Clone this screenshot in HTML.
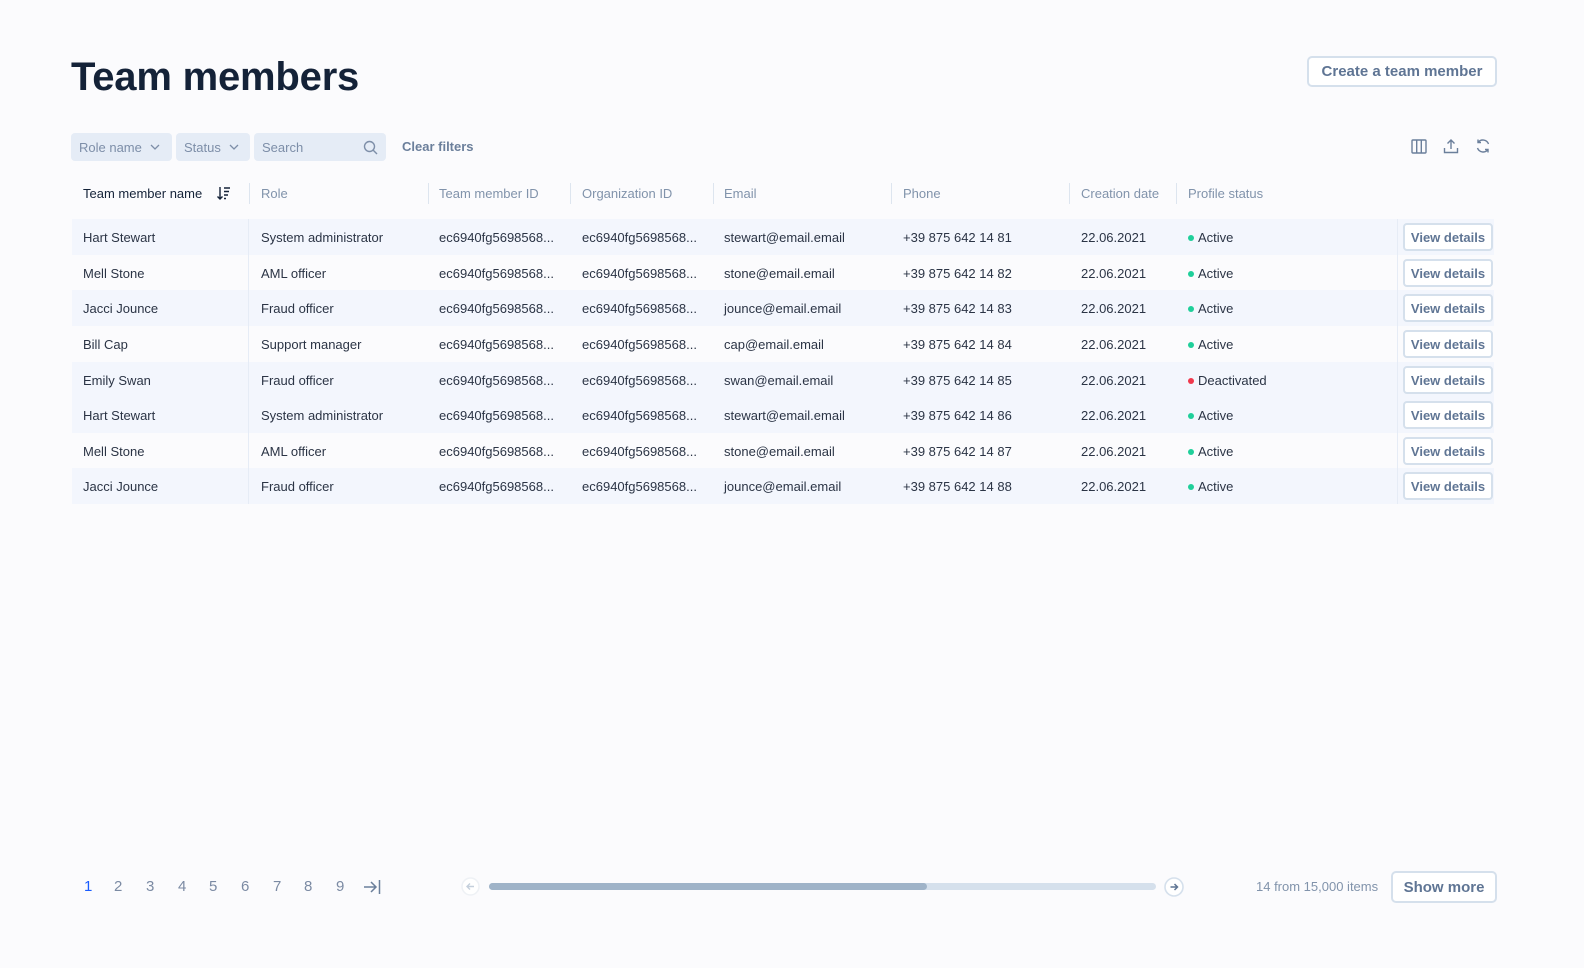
<!DOCTYPE html>
<html><head><meta charset="utf-8"><style>
*{box-sizing:border-box;margin:0;padding:0}
body{width:1584px;height:968px;background:#fbfbfd;font-family:"Liberation Sans",sans-serif;color:#2b3445;position:relative;overflow:hidden}
.abs{position:absolute}
h1{position:absolute;left:71px;top:55px;font-size:40px;font-weight:700;color:#142238;letter-spacing:-0.2px}
.btn{position:absolute;border:2px solid #d5e0ec;border-radius:5px;background:#fff;color:#5f7594;font-weight:700;display:flex;align-items:center;justify-content:center}
.filt{position:absolute;top:133px;height:28px;background:#e5ecf6;border-radius:4px;color:#7d8ea8;font-size:13px;display:flex;align-items:center;padding-left:8px}
.hd{position:absolute;top:186px;font-size:13px;color:#8193ab}
.sep{position:absolute;width:1px;background:#dde5ef}
.row{position:absolute;left:72px;width:1422px;height:36px;font-size:13px;color:#2b3445}
.row.l{background:#f3f6fd}
.row span{position:absolute;top:11px;white-space:nowrap}
.vd{position:absolute;left:1331px;top:4px;width:90px;height:28px;border:2px solid #d5e0ec;border-radius:4px;background:#fff;color:#5f7594;font-size:13px;font-weight:700;display:flex;align-items:center;justify-content:center}
.dot{display:inline-block;width:6px;height:6px;border-radius:50%;background:#1fcf9a;margin-right:4px;vertical-align:1px}
.pg{position:absolute;top:878px;font-size:15px;color:#7b8aa3}
</style></head><body>
<h1>Team members</h1>
<div class="btn" style="left:1307px;top:56px;width:190px;height:31px;font-size:15px">Create a team member</div>

<div class="filt" style="left:71px;width:101px">Role name <svg style="margin-left:8px" width="10" height="6" viewBox="0 0 10 6"><path d="M1 1l4 4 4-4" fill="none" stroke="#7d8ea8" stroke-width="1.3"/></svg></div>
<div class="filt" style="left:176px;width:74px">Status <svg style="margin-left:8px" width="10" height="6" viewBox="0 0 10 6"><path d="M1 1l4 4 4-4" fill="none" stroke="#7d8ea8" stroke-width="1.3"/></svg></div>
<div class="filt" style="left:254px;width:132px">Search <svg style="position:absolute;right:8px;top:7px" width="15" height="15" viewBox="0 0 15 15"><circle cx="6.5" cy="6.5" r="5" fill="none" stroke="#7d8ea8" stroke-width="1.4"/><path d="M10 10l4 4" stroke="#7d8ea8" stroke-width="1.4"/></svg></div>
<div class="abs" style="left:402px;top:139px;font-size:13px;font-weight:700;color:#6b7f9b">Clear filters</div>

<svg class="abs" style="left:1411px;top:139px" width="16" height="15" viewBox="0 0 16 15"><rect x="1" y="1" width="14" height="13" rx="1" fill="none" stroke="#6b7f9b" stroke-width="1.4"/><path d="M5.7 1v13M10.3 1v13" stroke="#6b7f9b" stroke-width="1.4"/></svg>
<svg class="abs" style="left:1443px;top:138px" width="16" height="16" viewBox="0 0 16 16"><path d="M8 11V2M4.5 5.5L8 2l3.5 3.5M1.5 10v4.5h13V10" fill="none" stroke="#6b7f9b" stroke-width="1.4"/></svg>
<svg class="abs" style="left:1475px;top:138px" width="16" height="16" viewBox="0 0 16 16"><path d="M13.5 6A6 6 0 0 0 3 4.5M2.5 10A6 6 0 0 0 13 11.5M3 1.5v3h3M13 14.5v-3h-3" fill="none" stroke="#6b7f9b" stroke-width="1.4"/></svg>

<div class="hd" style="left:83px;color:#142238">Team member name</div>
<svg class="abs" style="left:216px;top:186px" width="15" height="15" viewBox="0 0 15 15"><path d="M4 1v12M1.5 10.5L4 13l2.5-2.5M8 2h6M8 5.5h5M8 9h4M8 12.5h2" fill="none" stroke="#142238" stroke-width="1.4"/></svg>
<div class="hd" style="left:261px">Role</div>
<div class="hd" style="left:439px">Team member ID</div>
<div class="hd" style="left:582px">Organization ID</div>
<div class="hd" style="left:724px">Email</div>
<div class="hd" style="left:903px">Phone</div>
<div class="hd" style="left:1081px">Creation date</div>
<div class="hd" style="left:1188px">Profile status</div>
<div class="sep" style="left:249px;top:183px;height:21px"></div>
<div class="sep" style="left:428px;top:183px;height:21px"></div>
<div class="sep" style="left:570px;top:183px;height:21px"></div>
<div class="sep" style="left:713px;top:183px;height:21px"></div>
<div class="sep" style="left:891px;top:183px;height:21px"></div>
<div class="sep" style="left:1069px;top:183px;height:21px"></div>
<div class="sep" style="left:1176px;top:183px;height:21px"></div>

<div class="row l" style="top:219px"><span style="left:11px">Hart Stewart</span><span style="left:189px">System administrator</span><span style="left:367px">ec6940fg5698568...</span><span style="left:510px">ec6940fg5698568...</span><span style="left:652px">stewart@email.email</span><span style="left:831px">+39 875 642 14 81</span><span style="left:1009px">22.06.2021</span><span style="left:1116px"><i class="dot"></i>Active</span><div class="vd">View details</div></div>
<div class="row" style="top:255px"><span style="left:11px">Mell Stone</span><span style="left:189px">AML officer</span><span style="left:367px">ec6940fg5698568...</span><span style="left:510px">ec6940fg5698568...</span><span style="left:652px">stone@email.email</span><span style="left:831px">+39 875 642 14 82</span><span style="left:1009px">22.06.2021</span><span style="left:1116px"><i class="dot"></i>Active</span><div class="vd">View details</div></div>
<div class="row l" style="top:290px"><span style="left:11px">Jacci Jounce</span><span style="left:189px">Fraud officer</span><span style="left:367px">ec6940fg5698568...</span><span style="left:510px">ec6940fg5698568...</span><span style="left:652px">jounce@email.email</span><span style="left:831px">+39 875 642 14 83</span><span style="left:1009px">22.06.2021</span><span style="left:1116px"><i class="dot"></i>Active</span><div class="vd">View details</div></div>
<div class="row" style="top:326px"><span style="left:11px">Bill Cap</span><span style="left:189px">Support manager</span><span style="left:367px">ec6940fg5698568...</span><span style="left:510px">ec6940fg5698568...</span><span style="left:652px">cap@email.email</span><span style="left:831px">+39 875 642 14 84</span><span style="left:1009px">22.06.2021</span><span style="left:1116px"><i class="dot"></i>Active</span><div class="vd">View details</div></div>
<div class="row l" style="top:362px"><span style="left:11px">Emily Swan</span><span style="left:189px">Fraud officer</span><span style="left:367px">ec6940fg5698568...</span><span style="left:510px">ec6940fg5698568...</span><span style="left:652px">swan@email.email</span><span style="left:831px">+39 875 642 14 85</span><span style="left:1009px">22.06.2021</span><span style="left:1116px"><i class="dot" style="background:#f0394d"></i>Deactivated</span><div class="vd">View details</div></div>
<div class="row l" style="top:397px"><span style="left:11px">Hart Stewart</span><span style="left:189px">System administrator</span><span style="left:367px">ec6940fg5698568...</span><span style="left:510px">ec6940fg5698568...</span><span style="left:652px">stewart@email.email</span><span style="left:831px">+39 875 642 14 86</span><span style="left:1009px">22.06.2021</span><span style="left:1116px"><i class="dot"></i>Active</span><div class="vd">View details</div></div>
<div class="row" style="top:433px"><span style="left:11px">Mell Stone</span><span style="left:189px">AML officer</span><span style="left:367px">ec6940fg5698568...</span><span style="left:510px">ec6940fg5698568...</span><span style="left:652px">stone@email.email</span><span style="left:831px">+39 875 642 14 87</span><span style="left:1009px">22.06.2021</span><span style="left:1116px"><i class="dot"></i>Active</span><div class="vd">View details</div></div>
<div class="row l" style="top:468px"><span style="left:11px">Jacci Jounce</span><span style="left:189px">Fraud officer</span><span style="left:367px">ec6940fg5698568...</span><span style="left:510px">ec6940fg5698568...</span><span style="left:652px">jounce@email.email</span><span style="left:831px">+39 875 642 14 88</span><span style="left:1009px">22.06.2021</span><span style="left:1116px"><i class="dot"></i>Active</span><div class="vd">View details</div></div>
<div class="sep" style="left:248px;top:219px;height:285px;background:#e6ecf6"></div>
<div class="sep" style="left:1397px;top:219px;height:285px;background:#e6ecf6"></div>

<div class="pg" style="left:84px;color:#1a5cff">1</div>
<div class="pg" style="left:114px">2</div>
<div class="pg" style="left:146px">3</div>
<div class="pg" style="left:178px">4</div>
<div class="pg" style="left:209px">5</div>
<div class="pg" style="left:241px">6</div>
<div class="pg" style="left:273px">7</div>
<div class="pg" style="left:304px">8</div>
<div class="pg" style="left:336px">9</div>
<svg class="abs" style="left:363px;top:879px" width="18" height="16" viewBox="0 0 18 16"><path d="M1 8h12M8 3l5 5-5 5M16.5 1v14" fill="none" stroke="#6b7f9b" stroke-width="1.5"/></svg>

<svg class="abs" style="left:461px;top:877px" width="19" height="19" viewBox="0 0 19 19"><circle cx="9.5" cy="9.5" r="8.5" fill="#fff" stroke="#eef1f5" stroke-width="1.5"/><path d="M13 9.5H6M9 6.5l-3 3 3 3" fill="none" stroke="#c4cfdc" stroke-width="1.4"/></svg>
<div class="abs" style="left:489px;top:883px;width:667px;height:7px;border-radius:4px;background:#d5e0ec"></div>
<div class="abs" style="left:489px;top:883px;width:438px;height:7px;border-radius:4px;background:#9fb3c8"></div>
<svg class="abs" style="left:1164px;top:877px" width="20" height="20" viewBox="0 0 20 20"><circle cx="10" cy="10" r="9" fill="#fff" stroke="#d5e0ec" stroke-width="1.6"/><path d="M6.5 10h7M10.5 7l3 3-3 3" fill="none" stroke="#5f7594" stroke-width="1.5"/></svg>
<div class="abs" style="left:1256px;top:879px;font-size:13px;color:#8193ab">14 from 15,000 items</div>
<div class="btn" style="left:1391px;top:871px;width:106px;height:32px;font-size:15px">Show more</div>
</body></html>
